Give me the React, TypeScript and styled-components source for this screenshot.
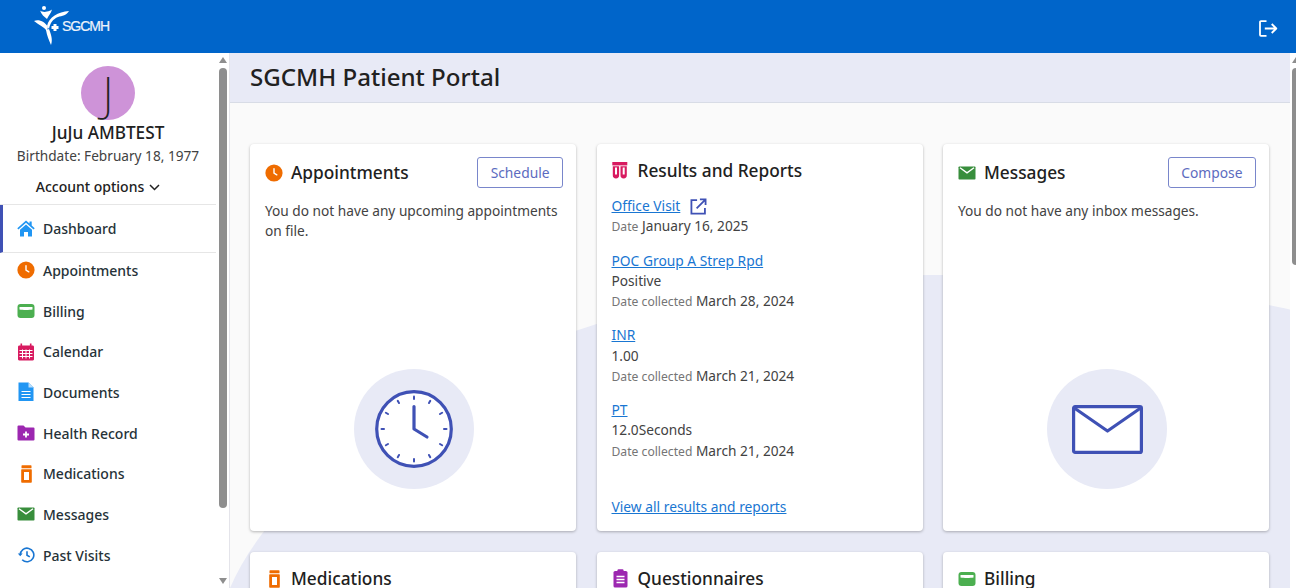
import { FC, ReactNode } from 'react'
import styled, { createGlobalStyle } from 'styled-components'

const GlobalStyle = createGlobalStyle`
  html, body {
    margin: 0;
    height: 100%;
    overflow: hidden;
    background: #fff;
    font-family: 'Noto Sans', 'Open Sans', sans-serif;
    color: #212121;
  }
  * { box-sizing: border-box; }
`

const Page = styled.div`
  width: 1296px;
  height: 588px;
  display: flex;
  flex-direction: column;
  overflow: hidden;
`

const Header = styled.header`
  height: 53px;
  flex: none;
  background: #0065ca;
  display: flex;
  align-items: center;
  justify-content: space-between;
  padding: 0 18px 0 34px;
`

const LogoWrap = styled.div`
  display: flex;
  align-items: center;
  height: 53px;
`

const LogoMark = styled.svg`
  align-self: flex-start;
  margin-top: 4px;
`

const LogoText = styled.span`
  font-family: 'Liberation Sans', sans-serif;
  font-size: 14px;
  letter-spacing: -1px;
  margin-left: -8px;
  margin-bottom: 2px;
  color: #eef3fb;
  -webkit-text-stroke: 0.2px #eef3fb;
`

const LogoutWrap = styled.span`
  display: flex;
  margin-top: 3px;
`

const Body = styled.div`
  flex: 1;
  display: flex;
  min-height: 0;
`

const Sidebar = styled.aside`
  position: relative;
  width: 230px;
  flex: none;
  padding-right: 13px;
  border-right: 1px solid #e4e4ea;
  overflow: hidden;
`

const Profile = styled.div`
  display: flex;
  flex-direction: column;
  align-items: center;
  padding-top: 13px;
  height: 152px;
  border-bottom: 1px solid #e6e6e6;
`

const Avatar = styled.div`
  width: 54px;
  height: 54px;
  border-radius: 50%;
  background: #ce93d8;
  display: flex;
  align-items: center;
  justify-content: center;
  font-size: 48px;
  font-weight: 200;
  line-height: 54px;
  color: #212121;
`

const UserName = styled.div`
  font-size: 17.2px;
  font-weight: 500;
  line-height: 24px;
  margin-top: 1px;
`

const Birthdate = styled.div`
  font-size: 13.65px;
  line-height: 20px;
  margin-top: 1px;
  color: #424242;
`

const AccountOptions = styled.div`
  display: flex;
  align-items: center;
  gap: 5px;
  font-size: 14px;
  font-weight: 500;
  line-height: 20px;
  margin: 11px 20px 0 0;
`

const NavList = styled.nav`
  display: flex;
  flex-direction: column;
`

const NavItem = styled.a<{ $active?: boolean }>`
  height: ${p => (p.$active ? '48px' : '40.7px')};
  display: flex;
  align-items: center;
  gap: 8px;
  padding-left: 17px;
  font-size: 14px;
  font-weight: 500;
  color: #263238;
  ${p =>
    p.$active &&
    `
    border-left: 3px solid #3f51b5;
    padding-left: 14px;
    border-bottom: 1px solid #e6e6e6;
    margin-bottom: -3px;
  `}
`

const IconBox = styled.span`
  width: 18px;
  height: 20px;
  display: flex;
  align-items: center;
  justify-content: center;
  flex: none;
`

const Main = styled.main`
  position: relative;
  flex: 1;
  min-width: 0;
  background: #fafafa;
  overflow: hidden;
  padding-right: 6px;
`

const TitleBar = styled.div`
  position: relative;
  height: 50px;
  background: #e8eaf6;
  border-bottom: 1px solid #d8dce6;
  display: flex;
  align-items: center;
  padding: 0 20px 2px;
`

const Title = styled.h1`
  margin: 0;
  font-size: 24.1px;
  font-weight: 500;
  color: #212121;
`

const Wave = styled.svg`
  position: absolute;
  left: 0;
  top: 0;
  width: 1066px;
  height: 535px;
`

const CardGrid = styled.div`
  position: relative;
  display: grid;
  grid-template-columns: repeat(3, 1fr);
  grid-auto-rows: 387px;
  gap: 21px 20.5px;
  padding: 41px 21px 0 20px;
`

const Card = styled.section`
  background: #fff;
  border-radius: 4px;
  box-shadow: 0 1px 3px rgba(0, 0, 0, 0.28);
  padding: 13px 13px 0 15px;
  display: flex;
  flex-direction: column;
  position: relative;
`

const CardHead = styled.div<{ $compact?: boolean }>`
  display: flex;
  align-items: center;
  height: ${p => (p.$compact ? '27px' : '31px')};
  gap: 8px;
`

const CardTitle = styled.h2`
  margin: -1px 0 0;
  font-size: 17.3px;
  font-weight: 500;
  color: #212121;
  flex: 1;
`

const OutlineButton = styled.button`
  height: 31px;
  background: #fff;
  border: 1px solid #7986cb;
  border-radius: 3px;
  font: 400 13.8px 'Noto Sans', sans-serif;
  color: #5c6bc0;
  padding: 0 12.5px;
`

const BodyText = styled.p`
  margin: 13px 0 0;
  font-size: 13.7px;
  line-height: 20px;
  color: #424242;
`

const EmptyArt = styled.div`
  position: absolute;
  left: 50%;
  top: 225px;
  margin-left: 1px;
  transform: translateX(-50%);
  width: 120px;
  height: 120px;
  border-radius: 50%;
  background: #e8eaf6;
  display: flex;
  align-items: center;
  justify-content: center;
`

const ResultList = styled.div`
  display: flex;
  flex-direction: column;
  gap: 14px;
  margin-top: 12px;
`

const ResultItem = styled.div`
  font-size: 13.7px;
  line-height: 20.25px;
  color: #424242;
`

const ResultLink = styled.a`
  font-size: 13.8px;
  color: #1976d2;
  text-decoration: underline;
  display: flex;
  align-items: center;
  gap: 10px;
  height: 20.25px;
  width: fit-content;
`

const MetaLabel = styled.span`
  font-size: 12.15px;
  line-height: 1;
  color: #757575;
`

const ViewAll = styled.a`
  position: absolute;
  left: 15px;
  top: 353px;
  font-size: 13.8px;
  line-height: 20px;
  color: #1976d2;
  text-decoration: underline;
`

const ScrollTrack = styled.div<{ $left: number; $width: number }>`
  position: absolute;
  left: ${p => p.$left}px;
  top: 0;
  bottom: 0;
  width: ${p => p.$width}px;
  background: #fff;
`

const ScrollThumb = styled.div<{ $height: number }>`
  position: absolute;
  left: 2px;
  top: 15px;
  width: 8px;
  height: ${p => p.$height}px;
  background: #8e8e8e;
  border-radius: 4px;
`

const ArrowUp = styled.div`
  position: absolute;
  left: 2px;
  top: 4px;
  border-left: 4px solid transparent;
  border-right: 4px solid transparent;
  border-bottom: 6px solid #8e8e8e;
`

const ArrowDown = styled.div`
  position: absolute;
  left: 2px;
  bottom: 4px;
  border-left: 4px solid transparent;
  border-right: 4px solid transparent;
  border-top: 6px solid #8e8e8e;
`

const Logo = () => (
  <LogoMark width="36" height="42" viewBox="0 0 36 42" fill="#fff">
    <circle cx="10" cy="4" r="2" />
    <path d="M6 6.500c2 1.600 5 1.800 7 1 2-.4 3.600-1 5-2-.8 3.500-3.400 5.800-5 9.500-2.600-2-5.800-4.800-7-8.500z" />
    <path d="M13 22C15 13 24 8 35 7 33 11 28 12 24 13 19 15 16 19 15 25z" />
    <path d="M0 17C5 15 11 18 14 23L13 27C10 23 5 21 0 17z" />
    <path d="M12 26C13 32 15 36 17 41 19 36 17 30 15 25z" />
    <path d="M19.500 20h3v2h2v3h-2v2h-3v-2h-2v-3h2z" />
  </LogoMark>
)

const ClockIcon = () => (
  <svg width="18" height="18" viewBox="0 0 18 18">
    <circle cx="9" cy="9" r="8.600" fill="#ef6c00" />
    <path d="M9 4.800V9l2.800 1.800" stroke="#fff" strokeWidth="1.400" fill="none" strokeLinecap="round" />
  </svg>
)

const BillingIcon = () => (
  <svg width="18" height="18" viewBox="0 0 18 18">
    <rect x="0.500" y="2" width="17" height="14" rx="3" fill="#4caf50" />
    <path d="M2.500 5h13v2.600c-3 .6-10 .6-13 0z" fill="#fff" />
  </svg>
)

const CalendarIcon = () => (
  <svg width="18" height="18" viewBox="0 0 18 18">
    <path d="M2 2.500h14a1.500 1.500 0 0 1 1 1.500v12.500a1.500 1.500 0 0 1-1.500 1h-13a1.500 1.500 0 0 1-1.500-1V4a1.500 1.500 0 0 1 1-1.500z" fill="#d81b60" />
    <rect x="3.500" y="0.500" width="1.600" height="3" fill="#d81b60" />
    <rect x="12.900" y="0.500" width="1.600" height="3" fill="#d81b60" />
    <path d="M2.500 7.500h13M2.500 10.500h13M2.500 13.500h13M5.500 6.500v9M9 6.500v9M12.500 6.500v9" stroke="#fff" strokeWidth="1" fill="none" />
  </svg>
)

const DocumentIcon = () => (
  <svg width="18" height="20" viewBox="0 0 18 20">
    <path d="M1.500 0.500h10l5 5v13.500h-15z" fill="#2196f3" />
    <path d="M11.500 0.500v5h5z" fill="#bbdefb" />
    <path d="M4.500 9.500h9M4.500 12.500h9M4.500 15.500h9" stroke="#fff" strokeWidth="1" />
  </svg>
)

const HealthIcon = () => (
  <svg width="18" height="16" viewBox="0 0 18 16">
    <path d="M0.500 1.500a1 1 0 0 1 1-1h5l2 2h8a1 1 0 0 1 1 1V14.500a1 1 0 0 1-1 1h-15a1 1 0 0 1-1-1z" fill="#9c27b0" />
    <path d="M9 6.500v6M6 9.500h6" stroke="#fff" strokeWidth="1.800" />
  </svg>
)

const MedicationIcon = () => (
  <svg width="11" height="18" viewBox="0 0 11 18">
    <rect x="0.500" y="0.300" width="10" height="3" rx="0.600" fill="#ef6c00" />
    <path d="M0.800 4.300h9.400a.6.6 0 0 1 .6.6v12a.8.8 0 0 1-.8.8H1a.8.8 0 0 1-.8-.8v-12a.6.6 0 0 1 .6-.6z" fill="#ef6c00" />
    <rect x="3" y="7" width="5" height="8" fill="#fff" />
  </svg>
)

const MailIcon = () => (
  <svg width="18" height="18" viewBox="0 0 18 18">
    <rect x="0.500" y="2.500" width="17" height="13" rx="0.800" fill="#388e3c" />
    <path d="M2 3.800l7 5 7-5" stroke="#fff" strokeWidth="1.400" fill="none" />
  </svg>
)

const HistoryIcon = () => (
  <svg width="18" height="18" viewBox="0 0 18 18" fill="none" stroke="#1976d2" strokeWidth="1.600">
    <path d="M3.200 9a6.800 6.800 0 1 1 2 4.800" />
    <path d="M0.800 7.600l2.400 2.600 2.500-2.600" fill="#1976d2" stroke="none" />
    <path d="M10 5.200v4l2.800 1.700" />
  </svg>
)

const HomeIcon = () => (
  <svg width="18" height="17" viewBox="0 0 18 17" fill="#2196f3">
    <path d="M9 0.500L0.300 8.300l1.100 1.200L9 2.800l7.600 6.700 1.100-1.200-3-2.700V1.500h-2.200v2.100z" />
    <path d="M3 9.700L9 4.400l6 5.300v6.800h-4v-4.600H7v4.600H3z" />
  </svg>
)

const TestTubesIcon = () => (
  <svg width="18" height="18" viewBox="0 0 18 18" fill="#d81b60">
    <rect x="0.300" y="0" width="15" height="3.400" />
    <path d="M0.800 4.300h6.300v9a3.150 3.150 0 0 1-6.300 0zM8.500 4.300h6.300v9a3.150 3.150 0 0 1-6.300 0z" />
    <path d="M3 5.500h2v7H3zM10.700 5.500h2v7h-2z" fill="#fff" />
  </svg>
)

const QuestionnaireIcon = () => (
  <svg width="15" height="19" viewBox="0 0 15 19">
    <rect x="0.500" y="2" width="14" height="16.600" rx="1.600" fill="#9c27b0" />
    <rect x="4.500" y="0.300" width="6" height="3.400" rx="1" fill="#9c27b0" />
    <path d="M3.500 7.500h8M3.500 10.500h8M3.500 13.500h8" stroke="#fff" strokeWidth="1.300" />
  </svg>
)

const ExternalIcon = () => (
  <svg width="17" height="17" viewBox="0 0 18 18" fill="none" stroke="#3f51b5" strokeWidth="1.900">
    <path d="M7.500 2.200H1.500v14.300h14.300v-6" />
    <path d="M7 11L16 2M10.500 1.500h6v6" />
  </svg>
)

const ChevronDown = () => (
  <svg width="11" height="7" viewBox="0 0 11 7" fill="none" stroke="#212121" strokeWidth="1.500">
    <path d="M1 1l4.500 4.500L10 1" />
  </svg>
)

const LogoutIcon = () => (
  <svg width="19" height="17" viewBox="0 0 19 17" fill="none" stroke="#fff" strokeWidth="1.800" strokeLinejoin="round">
    <path d="M7.500 1.200H2a1 1 0 0 0-1 1v12.600a1 1 0 0 0 1 1h5.500" />
    <path d="M5.800 8.500h11.400M12.700 4l4.600 4.500-4.600 4.500" />
  </svg>
)

const BigClock = () => {
  const ticks = Array.from({ length: 12 }, (_, i) => (i * Math.PI) / 6)
  return (
    <svg width="78" height="78" viewBox="0 0 78 78" fill="none" stroke="#3f51b5" strokeLinecap="round">
      <circle cx="39" cy="39" r="37.300" fill="#fff" strokeWidth="3.200" />
      {ticks.map((a, i) => (
        <line
          key={i}
          x1={39 + Math.sin(a) * 30}
          y1={39 - Math.cos(a) * 30}
          x2={39 + Math.sin(a) * 32.5}
          y2={39 - Math.cos(a) * 32.5}
          strokeWidth="2"
        />
      ))}
      <path d="M39 16.500V39l13 8" strokeWidth="3.200" strokeLinejoin="round" />
    </svg>
  )
}

const BigMail = () => (
  <svg width="71" height="49" viewBox="0 0 71 49" fill="#fff" stroke="#3f51b5" strokeWidth="3.200" strokeLinejoin="round">
    <rect x="1.600" y="1.600" width="67.800" height="45.800" rx="1.500" />
    <path d="M1.600 2.500L35.500 26 69.400 2.500" fill="none" />
  </svg>
)

const navItems: { label: string; icon: ReactNode; active?: boolean }[] = [
  { label: 'Dashboard', icon: <HomeIcon />, active: true },
  { label: 'Appointments', icon: <ClockIcon /> },
  { label: 'Billing', icon: <BillingIcon /> },
  { label: 'Calendar', icon: <CalendarIcon /> },
  { label: 'Documents', icon: <DocumentIcon /> },
  { label: 'Health Record', icon: <HealthIcon /> },
  { label: 'Medications', icon: <MedicationIcon /> },
  { label: 'Messages', icon: <MailIcon /> },
  { label: 'Past Visits', icon: <HistoryIcon /> },
]

const results = [
  { name: 'POC Group A Strep Rpd', value: 'Positive', date: 'March 28, 2024' },
  { name: 'INR', value: '1.00', date: 'March 21, 2024' },
  { name: 'PT', value: '12.0Seconds', date: 'March 21, 2024' },
]

const CardHeading: FC<{ icon: ReactNode; title: string; compact?: boolean; children?: ReactNode }> = ({
  icon,
  title,
  compact,
  children,
}) => (
  <CardHead $compact={compact}>
    <IconBox>{icon}</IconBox>
    <CardTitle>{title}</CardTitle>
    {children}
  </CardHead>
)

const App = () => (
  <Page>
    <GlobalStyle />
    <Header>
      <LogoWrap>
        <Logo />
        <LogoText>SGCMH</LogoText>
      </LogoWrap>
      <LogoutWrap>
        <LogoutIcon />
      </LogoutWrap>
    </Header>
    <Body>
      <Sidebar>
        <Profile>
          <Avatar>J</Avatar>
          <UserName>JuJu AMBTEST</UserName>
          <Birthdate>Birthdate: February 18, 1977</Birthdate>
          <AccountOptions>
            Account options <ChevronDown />
          </AccountOptions>
        </Profile>
        <NavList>
          {navItems.map(item => (
            <NavItem key={item.label} $active={item.active}>
              <IconBox>{item.icon}</IconBox>
              {item.label}
            </NavItem>
          ))}
        </NavList>
        <ScrollTrack $left={217} $width={12}>
          <ArrowUp />
          <ScrollThumb $height={440} />
          <ArrowDown />
        </ScrollTrack>
      </Sidebar>
      <Main>
        <Wave viewBox="0 0 1066 535" preserveAspectRatio="none">
          <path d="M0 535C60 395 320 222 700 222C860 222 990 240 1066 258V535Z" fill="#e8eaf6" />
        </Wave>
        <TitleBar>
          <Title>SGCMH Patient Portal</Title>
        </TitleBar>
        <CardGrid>
          <Card>
            <CardHeading icon={<ClockIcon />} title="Appointments">
              <OutlineButton>Schedule</OutlineButton>
            </CardHeading>
            <BodyText>You do not have any upcoming appointments on file.</BodyText>
            <EmptyArt>
              <BigClock />
            </EmptyArt>
          </Card>
          <Card>
            <CardHeading icon={<TestTubesIcon />} title="Results and Reports" compact />
            <ResultList>
              <ResultItem>
                <ResultLink>
                  Office Visit <ExternalIcon />
                </ResultLink>
                <div>
                  <MetaLabel>Date</MetaLabel> January 16, 2025
                </div>
              </ResultItem>
              {results.map(r => (
                <ResultItem key={r.name}>
                  <ResultLink>{r.name}</ResultLink>
                  <div>{r.value}</div>
                  <div>
                    <MetaLabel>Date collected</MetaLabel> {r.date}
                  </div>
                </ResultItem>
              ))}
            </ResultList>
            <ViewAll>View all results and reports</ViewAll>
          </Card>
          <Card>
            <CardHeading icon={<MailIcon />} title="Messages">
              <OutlineButton>Compose</OutlineButton>
            </CardHeading>
            <BodyText>You do not have any inbox messages.</BodyText>
            <EmptyArt>
              <BigMail />
            </EmptyArt>
          </Card>
          <Card>
            <CardHeading icon={<MedicationIcon />} title="Medications" compact />
          </Card>
          <Card>
            <CardHeading icon={<QuestionnaireIcon />} title="Questionnaires" compact />
          </Card>
          <Card>
            <CardHeading icon={<BillingIcon />} title="Billing" compact />
          </Card>
        </CardGrid>
        <ScrollTrack $left={1060} $width={6}>
          <ArrowUp />
          <ScrollThumb $height={197} />
        </ScrollTrack>
      </Main>
    </Body>
  </Page>
)

export default App
